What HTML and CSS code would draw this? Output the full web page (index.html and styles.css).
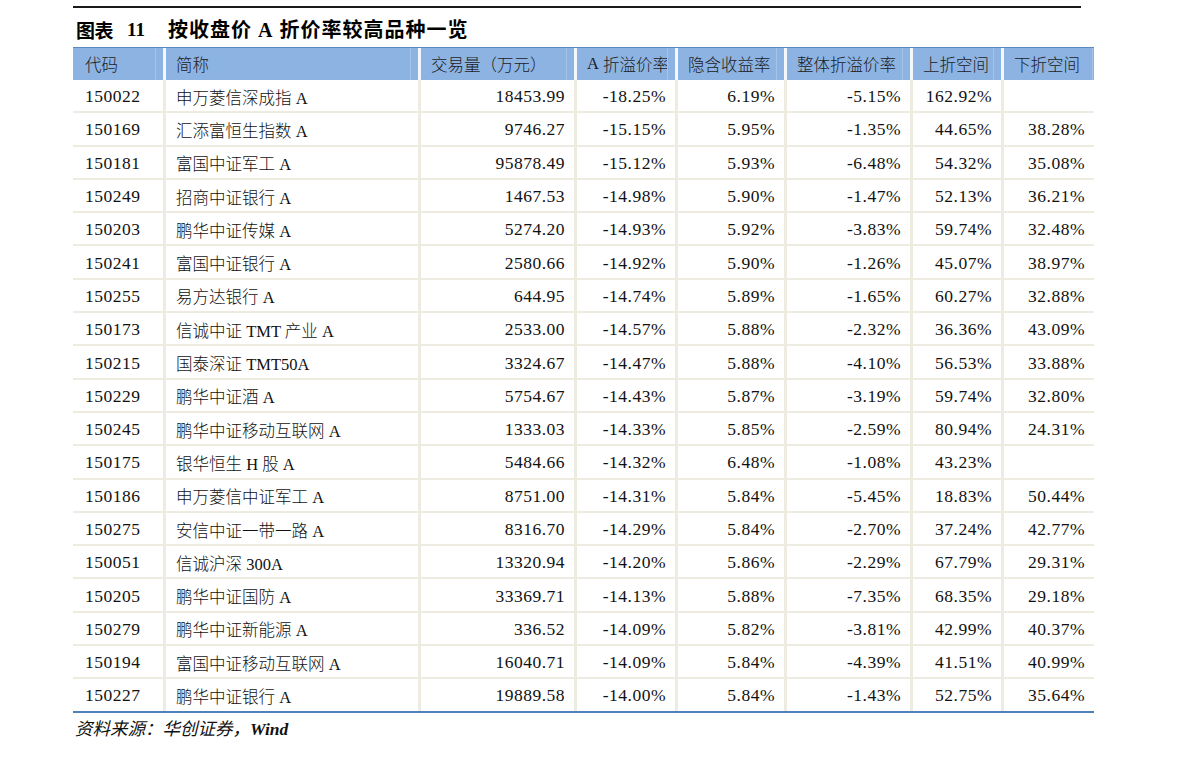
FILE: index.html
```html
<!DOCTYPE html>
<html lang="zh-CN">
<head>
<meta charset="utf-8">
<title>图表 11 按收盘价 A 折价率较高品种一览</title>
<link rel="stylesheet" href="styles.css">
</head>
<body>
<div class="page">
  <div class="top-rule"></div>
  <h1 class="title"><span class="t-label">图表</span><span class="t-num">11</span><span class="t-text">按收盘价 <span class="lat">A</span> 折价率较高品种一览</span></h1>
  <div class="table">
    <div class="row head">
      <div class="cell">代码</div>
      <div class="cell">简称</div>
      <div class="cell">交易量（万元）</div>
      <div class="cell"><span class="lat">A</span>&nbsp;折溢价率</div>
      <div class="cell">隐含收益率</div>
      <div class="cell">整体折溢价率</div>
      <div class="cell">上折空间</div>
      <div class="cell last">下折空间</div>
    </div>
    <div class="row"><div class="cell num l">150022</div><div class="cell name">申万菱信深成指 A</div><div class="cell num">18453.99</div><div class="cell num">-18.25%</div><div class="cell num">6.19%</div><div class="cell num">-5.15%</div><div class="cell num">162.92%</div><div class="cell num last"></div></div>
    <div class="row"><div class="cell num l">150169</div><div class="cell name">汇添富恒生指数 A</div><div class="cell num">9746.27</div><div class="cell num">-15.15%</div><div class="cell num">5.95%</div><div class="cell num">-1.35%</div><div class="cell num">44.65%</div><div class="cell num last">38.28%</div></div>
    <div class="row"><div class="cell num l">150181</div><div class="cell name">富国中证军工 A</div><div class="cell num">95878.49</div><div class="cell num">-15.12%</div><div class="cell num">5.93%</div><div class="cell num">-6.48%</div><div class="cell num">54.32%</div><div class="cell num last">35.08%</div></div>
    <div class="row"><div class="cell num l">150249</div><div class="cell name">招商中证银行 A</div><div class="cell num">1467.53</div><div class="cell num">-14.98%</div><div class="cell num">5.90%</div><div class="cell num">-1.47%</div><div class="cell num">52.13%</div><div class="cell num last">36.21%</div></div>
    <div class="row"><div class="cell num l">150203</div><div class="cell name">鹏华中证传媒 A</div><div class="cell num">5274.20</div><div class="cell num">-14.93%</div><div class="cell num">5.92%</div><div class="cell num">-3.83%</div><div class="cell num">59.74%</div><div class="cell num last">32.48%</div></div>
    <div class="row"><div class="cell num l">150241</div><div class="cell name">富国中证银行 A</div><div class="cell num">2580.66</div><div class="cell num">-14.92%</div><div class="cell num">5.90%</div><div class="cell num">-1.26%</div><div class="cell num">45.07%</div><div class="cell num last">38.97%</div></div>
    <div class="row"><div class="cell num l">150255</div><div class="cell name">易方达银行 A</div><div class="cell num">644.95</div><div class="cell num">-14.74%</div><div class="cell num">5.89%</div><div class="cell num">-1.65%</div><div class="cell num">60.27%</div><div class="cell num last">32.88%</div></div>
    <div class="row"><div class="cell num l">150173</div><div class="cell name">信诚中证 TMT 产业 A</div><div class="cell num">2533.00</div><div class="cell num">-14.57%</div><div class="cell num">5.88%</div><div class="cell num">-2.32%</div><div class="cell num">36.36%</div><div class="cell num last">43.09%</div></div>
    <div class="row"><div class="cell num l">150215</div><div class="cell name">国泰深证 TMT50A</div><div class="cell num">3324.67</div><div class="cell num">-14.47%</div><div class="cell num">5.88%</div><div class="cell num">-4.10%</div><div class="cell num">56.53%</div><div class="cell num last">33.88%</div></div>
    <div class="row"><div class="cell num l">150229</div><div class="cell name">鹏华中证酒 A</div><div class="cell num">5754.67</div><div class="cell num">-14.43%</div><div class="cell num">5.87%</div><div class="cell num">-3.19%</div><div class="cell num">59.74%</div><div class="cell num last">32.80%</div></div>
    <div class="row"><div class="cell num l">150245</div><div class="cell name">鹏华中证移动互联网 A</div><div class="cell num">1333.03</div><div class="cell num">-14.33%</div><div class="cell num">5.85%</div><div class="cell num">-2.59%</div><div class="cell num">80.94%</div><div class="cell num last">24.31%</div></div>
    <div class="row"><div class="cell num l">150175</div><div class="cell name">银华恒生 H 股 A</div><div class="cell num">5484.66</div><div class="cell num">-14.32%</div><div class="cell num">6.48%</div><div class="cell num">-1.08%</div><div class="cell num">43.23%</div><div class="cell num last"></div></div>
    <div class="row"><div class="cell num l">150186</div><div class="cell name">申万菱信中证军工 A</div><div class="cell num">8751.00</div><div class="cell num">-14.31%</div><div class="cell num">5.84%</div><div class="cell num">-5.45%</div><div class="cell num">18.83%</div><div class="cell num last">50.44%</div></div>
    <div class="row"><div class="cell num l">150275</div><div class="cell name">安信中证一带一路 A</div><div class="cell num">8316.70</div><div class="cell num">-14.29%</div><div class="cell num">5.84%</div><div class="cell num">-2.70%</div><div class="cell num">37.24%</div><div class="cell num last">42.77%</div></div>
    <div class="row"><div class="cell num l">150051</div><div class="cell name">信诚沪深 300A</div><div class="cell num">13320.94</div><div class="cell num">-14.20%</div><div class="cell num">5.86%</div><div class="cell num">-2.29%</div><div class="cell num">67.79%</div><div class="cell num last">29.31%</div></div>
    <div class="row"><div class="cell num l">150205</div><div class="cell name">鹏华中证国防 A</div><div class="cell num">33369.71</div><div class="cell num">-14.13%</div><div class="cell num">5.88%</div><div class="cell num">-7.35%</div><div class="cell num">68.35%</div><div class="cell num last">29.18%</div></div>
    <div class="row"><div class="cell num l">150279</div><div class="cell name">鹏华中证新能源 A</div><div class="cell num">336.52</div><div class="cell num">-14.09%</div><div class="cell num">5.82%</div><div class="cell num">-3.81%</div><div class="cell num">42.99%</div><div class="cell num last">40.37%</div></div>
    <div class="row"><div class="cell num l">150194</div><div class="cell name">富国中证移动互联网 A</div><div class="cell num">16040.71</div><div class="cell num">-14.09%</div><div class="cell num">5.84%</div><div class="cell num">-4.39%</div><div class="cell num">41.51%</div><div class="cell num last">40.99%</div></div>
    <div class="row final"><div class="cell num l">150227</div><div class="cell name">鹏华中证银行 A</div><div class="cell num">19889.58</div><div class="cell num">-14.00%</div><div class="cell num">5.84%</div><div class="cell num">-1.43%</div><div class="cell num">52.75%</div><div class="cell num last">35.64%</div></div>
  </div>
  <p class="source">资料来源：华创证券，<span class="wind">Wind</span></p>
</div>
</body>
</html>
```

FILE: styles.css
```css
* { box-sizing: border-box; }

html, body {
  margin: 0;
  padding: 0;
  background: #ffffff;
}

body {
  font-family: "Liberation Serif", "Noto Sans CJK SC", serif;
  color: #111111;
}

.page {
  padding-left: 73px;
  padding-top: 6px;
}

.top-rule {
  width: 1008px;
  height: 2px;
  background: #1a1a1a;
}

.title {
  margin: 9px 0 4px 0;
  height: 26px;
  display: flex;
  align-items: center;
  font-size: 19px;
  font-weight: 700;
  color: #000000;
  line-height: 26px;
  padding-left: 3px;
}

.t-label {
  font-family: "Noto Sans CJK SC", sans-serif;
  letter-spacing: -0.5px;
}

.t-num {
  font-family: "Liberation Serif", serif;
  margin-left: 14px;
  margin-right: 23px;
  font-size: 19px;
}

.t-text {
  font-family: "Liberation Serif", "Noto Sans CJK SC", serif;
  font-size: 20px;
  letter-spacing: 1px;
}

.lat {
  font-family: "Liberation Serif", serif;
}

.table {
  width: 1021px;
}

.row {
  display: grid;
  grid-template-columns: 93px 255px 156px 101px 109px 126px 91px 90px;
  height: 33.3px;
  border-bottom: 2px solid #eeece1;
}

.row.final {
  border-bottom: 2px solid #4f81bd;
}

.row.head {
  height: 33px;
  background: #8db3e2;
  border-top: 1px solid #5b89c2;
  border-bottom: none;
}

.cell {
  display: flex;
  align-items: center;
  border-right: 3px solid #eeece1;
  padding: 2px 10px 0 10px;
  white-space: nowrap;
  font-size: 16.5px;
  font-weight: 300;
  font-family: "Liberation Serif", "Noto Sans CJK SC", serif;
}

.cell.last {
  border-right: none;
}

.head .cell {
  position: relative;
  border-right: 3px solid #f4f7fb;
  padding: 0 8px 0 10px;
  color: #1c1c1c;
  font-size: 16.5px;
}

.head .cell::after {
  content: "";
  position: absolute;
  top: 0;
  bottom: 0;
  right: 7px;
  width: 1px;
  background: #a6c3e8;
}

.head .cell:first-child {
  padding-left: 12px;
}

.head .cell.last {
  border-right: none;
}

.head .cell.last::after {
  right: 1px;
}

.num {
  justify-content: flex-end;
  font-size: 17.5px;
  letter-spacing: 0.5px;
  padding-right: 9px;
  font-weight: 400;
}

.num.l {
  justify-content: flex-start;
  padding-left: 12px;
}

.name {
  padding-left: 10px;
}

.source {
  margin: 5px 0 0 2px;
  font-size: 17.5px;
  line-height: 22px;
  font-style: italic;
  color: #111111;
  font-family: "Liberation Serif", "Noto Sans CJK SC", serif;
}

.wind {
  font-weight: 700;
  font-family: "Liberation Serif", serif;
  font-size: 17.5px;
}
```
